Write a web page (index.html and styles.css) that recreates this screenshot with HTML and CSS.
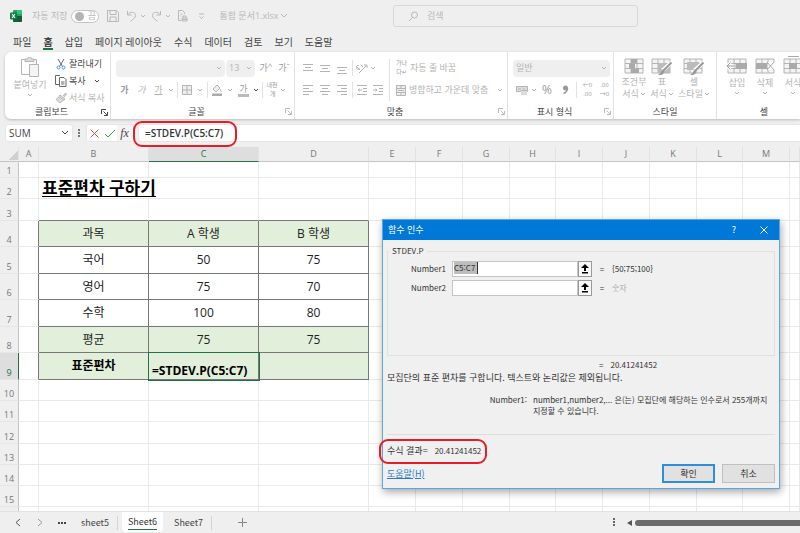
FILE: index.html
```html
<!DOCTYPE html>
<html lang="ko">
<head>
<meta charset="utf-8">
<title>통합 문서1.xlsx</title>
<link rel="stylesheet" href="styles.css">
</head>
<body>
<svg class="defs" aria-hidden="true">
  <symbol id="chev" viewBox="0 0 6 6"><path d="M1 2l2 2 2-2" fill="none" stroke="currentColor"/></symbol>
  <symbol id="launch" viewBox="0 0 7 7"><path d="M.5 5V.5H5M2.500 2.500L6 6M6.500 3v3.500H3" fill="none" stroke="currentColor"/></symbol>
  <symbol id="collapse" viewBox="0 0 8 10"><path d="M4 0L0 4h3v3h2V4h3zM1 8h6v1.500H1z" fill="currentColor"/></symbol>
  <symbol id="cells" viewBox="0 0 20 16"><path d="M1 1h18v14H1zM1 5.500h18M1 10.500h18M7 1v14M13 1v14" fill="#f4f4f4" stroke="currentColor"/></symbol>
</svg>

<header class="titlebar">
  <div class="quick">
    <svg class="logo" width="12" height="12" viewBox="0 0 12 12"><rect x="3" width="9" height="12" rx="1" fill="#21a366"/><path d="M3 6h9v5a1 1 0 0 1-1 1H4a1 1 0 0 1-1-1z" fill="#185c37"/><path d="M7 0h4a1 1 0 0 1 1 1v3H7z" fill="#33c481"/><rect y="2.500" width="7" height="7" rx="1" fill="#107c41"/><path d="M2 4l3 4M5 4L2 8" stroke="#fff" stroke-width="1.100"/></svg>
    <span class="autosave">자동 저장</span>
    <button class="toggle" aria-label="자동 저장"><i></i>끔</button>
    <button aria-label="저장" class="save"><svg width="12" height="12" viewBox="0 0 12 12"><path d="M.5.5h9l2 2v9H.5zM3 .5v4h6v-4M3 11.500V7h6v4.500" fill="none" stroke="currentColor"/></svg></button>
    <button aria-label="실행 취소" class="undo"><svg width="11" height="12" viewBox="0 0 11 12"><path d="M1.500 1v4h4M1.500 5C4 1 9.500 1.500 9.500 5.500 9.500 8 7 9 4.500 11.500" fill="none" stroke="currentColor"/></svg><svg class="c"><use href="#chev"/></svg></button>
    <button aria-label="다시 실행" class="undo"><svg width="11" height="12" viewBox="0 0 11 12"><path d="M9.500 1v4h-4M9.500 5C7 1 1.500 1.500 1.500 5.500 1.500 8 4 9 6.500 11.500" fill="none" stroke="currentColor"/></svg><svg class="c"><use href="#chev"/></svg></button>
    <button aria-label="인쇄 미리 보기" class="preview"><svg width="11" height="12" viewBox="0 0 11 12"><path d="M4 10.500H1.500V.5h4l2 2V4M3.500 4h2M3.500 6h1M5 11V8h5v3zM6 8V6h3v2M5 9.500h5" fill="none" stroke="currentColor"/></svg></button>
    <button aria-label="빠른 실행 도구 모음" class="more"><svg width="7" height="7" viewBox="0 0 7 7"><path d="M1 1h5M1.500 3.500l2 2 2-2" fill="none" stroke="currentColor"/></svg></button>
    <button class="doc">통합 문서1.xlsx<svg width="8" height="6" viewBox="0 0 8 6"><path d="M1 1l3 3 3-3" fill="none" stroke="currentColor"/></svg></button>
  </div>
  <label class="search"><svg width="11" height="11" viewBox="0 0 11 11"><circle cx="6.500" cy="4" r="3" fill="none" stroke="currentColor"/><path d="M4.500 6.500L1 10" stroke="currentColor"/></svg><input type="search" placeholder="검색" aria-label="검색"></label>
</header>

<nav class="tabs">
  <a href="#">파일</a><a href="#" class="on">홈</a><a href="#">삽입</a><a href="#">페이지 레이아웃</a><a href="#">수식</a><a href="#">데이터</a><a href="#">검토</a><a href="#">보기</a><a href="#">도움말</a>
</nav>

<section class="ribbon">
  <div class="group clipboard">
    <div class="tools">
      <button class="big paste"><svg width="20" height="20" viewBox="0 0 20 20"><path d="M6 2.500H1.500v15H9M13 2.500h3.500V7" fill="none" stroke="currentColor"/><path d="M5 4.500V2h2.500a2 2 0 0 1 4 0H14v2.500z" fill="#ddd" stroke="currentColor"/><path d="M9.500 7.500h9v12h-9z" fill="#f4f4f4" stroke="currentColor"/></svg><span>붙여넣기</span><svg class="c"><use href="#chev"/></svg></button>
      <div class="stack">
        <button class="dark"><svg width="12" height="12" viewBox="0 0 12 12"><path d="M3 1l4.500 7.500M9 1L4.500 8.500" fill="none" stroke="#666"/><circle cx="3.500" cy="9.500" r="1.500" fill="none" stroke="#3d9bd9"/><circle cx="8.500" cy="9.500" r="1.500" fill="none" stroke="#3d9bd9"/></svg>잘라내기</button>
        <button class="dark"><svg width="12" height="12" viewBox="0 0 12 12"><path d="M4 9.500H.5v-9H5M4.500 2.500H9l2 2v7H4.500zM6 7h3.500M6 9h3.500" fill="none" stroke="#666"/></svg>복사<svg class="c gap"><use href="#chev"/></svg></button>
        <button><svg width="12" height="12" viewBox="0 0 12 12"><path d="M8 4l2.500-3 1 1L9 5M5 3l5 4-1 1.500-5-4zM4 5L1 7.500 5 11l3-2.500" fill="#ddd" stroke="currentColor"/></svg>서식 복사</button>
      </div>
    </div>
    <div class="caption"><span>클립보드</span><button aria-label="클립보드 옵션" class="dark"><svg width="7" height="7"><use href="#launch"/></svg></button></div>
  </div>

  <div class="group font">
    <div class="tools rows">
      <div class="row">
        <span class="select name"><select aria-label="글꼴"><option></option></select><svg class="c"><use href="#chev"/></svg></span>
        <span class="select size"><select aria-label="글꼴 크기"><option>13</option></select><svg class="c"><use href="#chev"/></svg></span>
        <button class="w18 mid">가<sup>^</sup></button><button class="w18 mid">가<sup>ˇ</sup></button>
      </div>
      <div class="row">
        <button class="w17 mid"><b>가</b></button><button class="w17"><i>가</i></button><button class="w17"><u>가</u></button><button class="w8" aria-label="밑줄 옵션"><svg class="c"><use href="#chev"/></svg></button><hr>
        <button class="w14" aria-label="테두리"><svg width="10" height="10" viewBox="0 0 10 10"><path d="M.5.5h9v9h-9zM5 0v10M0 5h10" fill="#eee" stroke="currentColor"/></svg></button><button class="w11" aria-label="테두리 옵션"><svg class="c"><use href="#chev"/></svg></button><hr>
        <button class="w14" aria-label="채우기 색"><svg width="12" height="12" viewBox="0 0 12 12"><path d="M6 1L2 5l3 3 4-4zM9 5l1.500 3" fill="#eee" stroke="currentColor"/><path d="M1 9.500h10V12H1z" fill="#aaa"/></svg></button><button class="w11" aria-label="채우기 색 옵션"><svg class="c"><use href="#chev"/></svg></button>
        <button class="color">가</button><button class="w8 dark" aria-label="글꼴 색 옵션"><svg class="c"><use href="#chev"/></svg></button><hr>
        <button class="w14 tiny">내천<br>&nbsp;개</button><button class="w8" aria-label="윗주 옵션"><svg class="c"><use href="#chev"/></svg></button>
      </div>
    </div>
    <div class="caption"><span>글꼴</span><button aria-label="글꼴 옵션"><svg width="7" height="7"><use href="#launch"/></svg></button></div>
  </div>

  <div class="group align">
    <div class="tools">
      <div class="rows">
        <div class="row">
          <button class="w17" aria-label="위쪽 맞춤"><svg width="10" height="12"><path d="M0 2.500h10M2 5.500h6M0 8.500h10" stroke="currentColor"/></svg></button><button class="w17" aria-label="가운데 맞춤"><svg width="10" height="12"><path d="M0 3.500h10M2 6.500h6M0 9.500h10" stroke="currentColor"/></svg></button><button class="w17" aria-label="아래쪽 맞춤"><svg width="10" height="12"><path d="M0 5.500h10M2 8.500h6M0 11.500h10" stroke="currentColor"/></svg></button><hr>
          <button class="w14" aria-label="방향"><svg width="12" height="12" viewBox="0 0 12 12"><path d="M3 11l8-8M8 3h3v3M1 5l3 3M3 3.500a2 2 0 1 0 1 3M5 3l2 2" fill="none" stroke="currentColor"/></svg></button><button class="w8" aria-label="방향 옵션"><svg class="c"><use href="#chev"/></svg></button>
        </div>
        <div class="row">
          <button class="w17" aria-label="왼쪽"><svg width="10" height="10"><path d="M0 .5h10M0 3.500h6M0 6.500h10M0 9.500h6" stroke="currentColor"/></svg></button><button class="w17" aria-label="가운데"><svg width="10" height="10"><path d="M0 .5h10M2 3.500h6M0 6.500h10M2 9.500h6" stroke="currentColor"/></svg></button><button class="w17" aria-label="오른쪽"><svg width="10" height="10"><path d="M0 .5h10M4 3.500h6M0 6.500h10M4 9.500h6" stroke="currentColor"/></svg></button><hr>
          <button class="w14" aria-label="내어쓰기"><svg width="10" height="10"><path d="M0 .5h10M6 3.500h4M6 6.500h4M0 9.500h10M5 5H1M2.500 3.500L1 5l1.500 1.500" fill="none" stroke="currentColor"/></svg></button><button class="w18" aria-label="들여쓰기"><svg width="10" height="10"><path d="M0 .5h10M6 3.500h4M6 6.500h4M0 9.500h10M0 5h4M2.500 3.500L4 5 2.500 6.500" fill="none" stroke="currentColor"/></svg></button>
        </div>
      </div>
      <div class="rows wrap">
        <div class="row"><button class="text"><span class="tiny">가나<br>다↵</span>자동 줄 바꿈</button></div>
        <div class="row"><button class="text"><svg width="10" height="11" viewBox="0 0 10 11"><path d="M.5.5h9v10h-9zM.5 3.500h9M.5 7.500h9M5 .5v3M5 7.500v3M2 5.500h6" fill="#eee" stroke="currentColor"/></svg>병합하고 가운데 맞춤<svg class="c gap"><use href="#chev"/></svg></button></div>
      </div>
    </div>
    <div class="caption"><span>맞춤</span><button aria-label="맞춤 옵션"><svg width="7" height="7"><use href="#launch"/></svg></button></div>
  </div>

  <div class="group number">
    <div class="tools rows">
      <div class="row"><span class="select format"><select aria-label="표시 형식"><option>일반</option></select><svg class="c"><use href="#chev"/></svg></span></div>
      <div class="row">
        <button class="w17" aria-label="회계 형식"><svg width="12" height="10" viewBox="0 0 12 10"><path d="M.5 1.500h11v5H.5zM2 4h3M8 3v2" fill="#ddd" stroke="currentColor"/><path d="M5 5h6v5H5z" fill="#bbb"/><path d="M5 7h6M5 9h6" stroke="#fff"/></svg></button><button class="w8" aria-label="회계 옵션"><svg class="c"><use href="#chev"/></svg></button>
        <button class="w18 pct">%</button><button class="w18" aria-label="쉼표"><svg width="7" height="10" viewBox="0 0 7 10"><circle cx="3.500" cy="3" r="2.500" fill="#999"/><path d="M5.500 3q0 4-4 5.500" fill="none" stroke="#999" stroke-width="1.500"/></svg></button><hr>
        <button class="w17 tiny">←0<br>.00</button><button class="w17 tiny">.00<br>→0</button>
      </div>
    </div>
    <div class="caption"><span>표시 형식</span><button aria-label="표시 형식 옵션"><svg width="7" height="7"><use href="#launch"/></svg></button></div>
  </div>

  <div class="group styles">
    <div class="tools">
      <button class="big"><svg width="20" height="17" viewBox="0 0 20 17"><use href="#cells" width="20" height="16"/><path d="M7 1h6v4H7zM5 5.500h6v5H5zM7 10.500h8V15H7z" fill="#aaa"/></svg><span>조건부</span><span>서식<svg class="c"><use href="#chev"/></svg></span></button>
      <button class="big"><svg width="22" height="17" viewBox="0 0 22 17"><use href="#cells" width="20" height="16"/><path d="M7 5h12v10H7z" fill="#bbb"/><path d="M20.500 4.500l-9 8" stroke="#fff" stroke-width="4"/><path d="M20.500 4.500l-8 8" stroke="#999" stroke-width="2"/><path d="M12 11q3 2 0 5-3 2-5 1 3-2 5-6z" fill="#999"/></svg><span>표</span><span>서식<svg class="c"><use href="#chev"/></svg></span></button>
      <button class="big wide"><svg width="22" height="17" viewBox="0 0 22 17"><use href="#cells" width="20" height="16"/><path d="M4 4h12v8H4z" fill="#bbb"/><path d="M20.500 4.500l-9 8" stroke="#fff" stroke-width="4"/><path d="M20.500 4.500l-8 8" stroke="#999" stroke-width="2"/><path d="M12 11q3 2 0 5-3 2-5 1 3-2 5-6z" fill="#999"/></svg><span>셀</span><span>스타일<svg class="c"><use href="#chev"/></svg></span></button>
    </div>
    <div class="caption"><span>스타일</span></div>
  </div>

  <div class="group cellgroup">
    <div class="tools">
      <button class="big"><svg width="20" height="17" viewBox="0 0 20 17"><use href="#cells" width="20" height="16"/><path d="M7 5h13v6H7z" fill="#aaa"/><path d="M0 8h9M3.500 4.500L0 8l3.500 3.500" stroke="#fff" stroke-width="3" fill="none"/><path d="M0 8h9M3.500 4.500L0 8l3.500 3.500" stroke="#999" fill="none"/></svg><span>삽입</span><svg class="c"><use href="#chev"/></svg></button>
      <button class="big"><svg width="20" height="17" viewBox="0 0 20 17"><use href="#cells" width="20" height="16"/><path d="M1 5h11v6H1z" fill="#aaa"/><path d="M13 4h7v8h-7z" fill="#fff"/><path d="M12 4l7 8M19 4l-7 8" stroke="#aaa"/></svg><span>삭제</span><svg class="c"><use href="#chev"/></svg></button>
      <button class="big"><svg class="tall" width="20" height="19" viewBox="0 0 20 19"><use href="#cells" y="2" width="20" height="16"/><path d="M6 7h8v6H6z" fill="#aaa"/><path d="M5 .5h11" stroke="#aaa"/></svg><span>서식</span><svg class="c"><use href="#chev"/></svg></button>
    </div>
    <div class="caption"><span>셀</span></div>
  </div>
</section>

<section class="formulabar">
  <div class="namebox"><input value="SUM" aria-label="이름 상자"><button aria-label="이름 목록"><svg width="8" height="6" viewBox="0 0 8 6"><path d="M1 1l3 3 3-3" fill="none" stroke="currentColor"/></svg></button></div>
  <svg class="grip" width="2" height="9"><path d="M0 0h2v2H0zM0 3h2v2H0zM0 6h2v2H0z" fill="#777"/></svg>
  <div class="fbuttons">
    <button aria-label="취소"><svg width="9" height="9"><path d="M.5.5l8 8M8.500.5l-8 8" stroke="#e5484d"/></svg></button>
    <button aria-label="입력"><svg width="12" height="9"><path d="M1 5l3 3L11 1" fill="none" stroke="#2f9e50"/></svg></button>
    <button class="fx" aria-label="함수 삽입"><i>fx</i></button>
  </div>
  <div class="formula marked"><input value="=STDEV.P(C5:C7)" aria-label="수식 입력줄"></div>
</section>

<main class="sheet">
<table class="grid">
<colgroup><col class="rh"><col class="ca"><col class="cw"><col class="cw"><col class="cw"><col class="cn"><col class="cn"><col class="cn"><col class="cs"><col class="cn"><col class="cn"><col class="cn"><col class="cs"><col class="cn"><col></colgroup>
<thead><tr><th class="corner"></th><th>A</th><th>B</th><th class="sel">C</th><th>D</th><th>E</th><th>F</th><th>G</th><th>H</th><th>I</th><th>J</th><th>K</th><th>L</th><th>M</th><th></th></tr></thead>
<tbody>
<tr class="h16"><th>1</th><td></td><td></td><td></td><td></td><td></td><td></td><td></td><td></td><td></td><td></td><td></td><td></td><td></td><td></td></tr>
<tr class="h21"><th>2</th><td></td><td class="title" colspan="2"><span>표준편차 구하기</span></td><td></td><td></td><td></td><td></td><td></td><td></td><td></td><td></td><td></td><td></td><td></td></tr>
<tr class="h22 above"><th>3</th><td></td><td class="d"></td><td class="d"></td><td class="d"></td><td></td><td></td><td></td><td></td><td></td><td></td><td></td><td></td><td></td><td></td></tr>
<tr class="h26"><th>4</th><td class="e"></td><td class="d g">과목</td><td class="d g">A 학생</td><td class="d g">B 학생</td><td></td><td></td><td></td><td></td><td></td><td></td><td></td><td></td><td></td><td></td></tr>
<tr class="h27"><th>5</th><td class="e"></td><td class="d">국어</td><td class="d">50</td><td class="d">75</td><td></td><td></td><td></td><td></td><td></td><td></td><td></td><td></td><td></td><td></td></tr>
<tr class="h26"><th>6</th><td class="e"></td><td class="d">영어</td><td class="d">75</td><td class="d">70</td><td></td><td></td><td></td><td></td><td></td><td></td><td></td><td></td><td></td><td></td></tr>
<tr class="h27"><th>7</th><td class="e"></td><td class="d">수학</td><td class="d">100</td><td class="d">80</td><td></td><td></td><td></td><td></td><td></td><td></td><td></td><td></td><td></td><td></td></tr>
<tr class="h26"><th>8</th><td class="e"></td><td class="d g">평균</td><td class="d g">75</td><td class="d g">75</td><td></td><td></td><td></td><td></td><td></td><td></td><td></td><td></td><td></td><td></td></tr>
<tr class="h27"><th class="sel">9</th><td class="e"></td><td class="d g strong">표준편차</td><td class="d g edit">=STDEV.P(C5:C7)</td><td class="d g"></td><td></td><td></td><td></td><td></td><td></td><td></td><td></td><td></td><td></td><td></td></tr>
<tr class="h21"><th>10</th><td></td><td></td><td></td><td></td><td></td><td></td><td></td><td></td><td></td><td></td><td></td><td></td><td></td><td></td></tr>
<tr class="h21"><th>11</th><td></td><td></td><td></td><td></td><td></td><td></td><td></td><td></td><td></td><td></td><td></td><td></td><td></td><td></td></tr>
<tr class="h22"><th>12</th><td></td><td></td><td></td><td></td><td></td><td></td><td></td><td></td><td></td><td></td><td></td><td></td><td></td><td></td></tr>
<tr class="h21"><th>13</th><td></td><td></td><td></td><td></td><td></td><td></td><td></td><td></td><td></td><td></td><td></td><td></td><td></td><td></td></tr>
<tr class="h21"><th>14</th><td></td><td></td><td></td><td></td><td></td><td></td><td></td><td></td><td></td><td></td><td></td><td></td><td></td><td></td></tr>
<tr class="h21"><th>15</th><td></td><td></td><td></td><td></td><td></td><td></td><td></td><td></td><td></td><td></td><td></td><td></td><td></td><td></td></tr>
<tr class="h21"><th></th><td></td><td></td><td></td><td></td><td></td><td></td><td></td><td></td><td></td><td></td><td></td><td></td><td></td><td></td></tr>
</tbody>
</table>
</main>

<footer class="sheetbar">
  <button class="w22" aria-label="이전 시트"><svg width="6" height="9"><path d="M5 1L1 4.500 5 8" fill="none" stroke="#555"/></svg></button>
  <button class="w22" aria-label="다음 시트"><svg width="6" height="9"><path d="M1 1l4 3.500L1 8" fill="none" stroke="#999"/></svg></button>
  <button class="w22" aria-label="시트 목록"><svg width="8" height="2"><path d="M0 0h2v2H0zM3 0h2v2H3zM6 0h2v2H6z" fill="#444"/></svg></button>
  <button class="tab">sheet5</button><button class="tab on"><span>Sheet6</span></button><button class="tab last">Sheet7</button>
  <button class="add" aria-label="새 시트"><svg width="9" height="9"><path d="M0 4.500h9M4.500 0v9" stroke="#888"/></svg></button>
  <svg class="dots" width="2" height="9"><path d="M0 0h2v2H0zM0 3h2v2H0zM0 6h2v2H0z" fill="#666"/></svg>
  <div class="scroll"><svg width="5" height="6"><path d="M5 0v6L0 3z" fill="#555"/></svg><i></i></div>
</footer>

<form class="dialog" role="dialog" aria-labelledby="dt">
  <div class="dtitle"><span id="dt">함수 인수</span><button type="button">?</button><button type="button" aria-label="닫기"><svg width="8" height="8"><path d="M.5.5l7 7M7.500.5l-7 7" stroke="#fff"/></svg></button></div>
  <div class="dbody">
    <fieldset>
      <legend>STDEV.P</legend>
      <div class="arg"><label for="n1">Number1</label><span class="box"><input id="n1" class="picked" value="C5:C7"></span><button type="button" aria-label="범위 선택"><svg width="8" height="10"><use href="#collapse"/></svg></button><span>=</span><span>{50;75;100}</span></div>
      <div class="arg"><label for="n2">Number2</label><span class="box"><input id="n2"></span><button type="button" aria-label="범위 선택"><svg width="8" height="10"><use href="#collapse"/></svg></button><span>=</span><span class="hint">숫자</span></div>
    </fieldset>
    <div class="outcome"><span>=</span><span>20.41241452</span></div>
    <p class="about">모집단의 표준 편차를 구합니다. 텍스트와 논리값은 제외됩니다.</p>
    <dl><dt>Number1:</dt><dd>number1,number2,... 은(는) 모집단에 해당하는 인수로서 255개까지<br>지정할 수 있습니다.</dd></dl>
    <div class="result marked"><span>수식 결과=</span><span class="value">20.41241452</span></div>
    <div class="actions"><a href="#">도움말(H)</a><button class="ok">확인</button><button type="button">취소</button></div>
  </div>
</form>
</body>
</html>
```
FILE: styles.css
```css
*, *::after { box-sizing: border-box; }

body {
  margin: 0;
  height: 100vh;
  display: flex;
  flex-direction: column;
  position: relative;
  overflow: hidden;
  background: #efefef;
  color: #444;
  font: 9px/12px "Open Sans", "Noto Sans CJK KR", sans-serif;
}

button, input, select { font: inherit; color: inherit; margin: 0; padding: 0; border: 0; background: none; border-radius: 0; outline: 0; min-width: 0; }
button { display: flex; align-items: center; justify-content: center; flex: none; white-space: nowrap; }
svg { flex: none; display: block; }
.defs { position: absolute; width: 0; height: 0; }
.c { width: 6px; height: 6px; }

/* title bar */
.titlebar { flex: none; height: 32px; display: grid; grid-template-columns: 393px minmax(0, 245px) 1fr; align-items: center; color: #b8b8b8; }
.quick { display: flex; align-items: center; padding-left: 10px; }
.autosave { margin: 0 4px 0 10px; white-space: nowrap; }
.toggle { width: 28px; height: 13px; border: 1px solid #c4c4c4; border-radius: 7px; background: #fff; gap: 4px; }
.toggle i { width: 9px; height: 9px; border-radius: 50%; background: #b4b4b4; }
.save { margin: 0 7px 0 8px; }
.undo { gap: 3px; margin-right: 5px; }
.preview { margin-left: 1px; }
.more { margin: 0 14px 0 10px; }
.doc { gap: 2px; }
.search { height: 22px; display: flex; align-items: center; gap: 8px; padding: 0 14px; border: 1px solid #d8d8d8; border-radius: 3px; }
.search input { flex: 1; }
.search input::placeholder { color: #b8b8b8; }

/* tabs */
.tabs { flex: none; height: 20px; display: flex; gap: 12px; padding: 2px 13px; font-size: 10px; line-height: 16px; }
.tabs a { color: #444; text-decoration: none; white-space: nowrap; }
.tabs .on { font-weight: 700; border-bottom: 2px solid #217346; }

/* ribbon */
.ribbon { flex: none; height: 67px; margin-left: 5px; display: flex; overflow: hidden; background: #fff; color: #b4b4b4; border-radius: 6px 0 0 6px; box-shadow: 0 1px 3px #bbb; }
.group { flex: none; display: flex; flex-direction: column; padding: 3px 0 1px; border-right: 1px solid #e2e2e2; }
.tools { flex: 1; display: flex; }
.caption { height: 13px; display: flex; align-items: center; color: #444; }
.caption span { flex: 1; text-align: center; }
.caption button { width: 12px; color: #bbb; }
.ribbon .dark { color: #444; }
.clipboard { width: 106px; }
.font { width: 184px; }
.align { width: 213px; }
.number { width: 106px; }
.styles { width: 103px; }
.cellgroup { flex: 1 0 94px; border: 0; }
.big { flex-direction: column; justify-content: flex-start; align-self: flex-start; width: 28px; padding-top: 3px; line-height: 12px; }
.big > svg:first-child { margin-bottom: 1px; }
.big .tall { margin-top: -2px; }
.big span { display: flex; align-items: center; gap: 1px; }
.paste { width: 50px; padding-top: 2px; }
.wide { width: 36px; }
.styles .tools, .cellgroup .tools { padding-left: 6px; }
.cellgroup .big span, .paste span { margin: 1px 0; }
.stack { display: flex; flex-direction: column; align-items: flex-start; }
.stack button { height: 17px; gap: 2px; }
.gap { margin-left: 6px; }
.rows { display: flex; flex-direction: column; padding-top: 4px; gap: 4px; }
.row { height: 18px; display: flex; align-items: center; }
.row hr { width: 1px; height: 16px; margin: 0 2px; border: 0; background: #e2e2e2; }
.rows.tools { padding-left: 5px; }
.select { height: 17px; display: flex; align-items: center; padding: 0 3px; border-radius: 4px; background: #efefef; }
.select select { flex: 1; appearance: none; }
.name { width: 109px; margin-right: 1px; }
.size { width: 29px; margin-right: 2px; }
.format { width: 97px; }
.w8 { width: 8px; }
.w11 { width: 11px; }
.w14 { width: 14px; }
.w17 { width: 17px; }
.w18 { width: 18px; }
.w22 { width: 22px; }
.mid { color: #999; }
.row sup { font-size: 8px; line-height: 8px; align-self: flex-start; }
.color { width: 11px; margin: 0 3px; line-height: 10px; color: #999; border-bottom: 3px solid #bbb; }
.tiny { font-size: 6px; line-height: 9px; text-align: center; color: #999; }
.pct { font-size: 12px; color: #999; }
.align .rows { padding-left: 4px; width: 94px; }
.align .wrap { width: auto; margin: 4px 0; padding: 0 0 0 6px; border-left: 1px solid #e2e2e2; }
.text { gap: 3px; }

/* formula bar */
.formulabar { flex: none; height: 28px; display: flex; align-items: center; padding: 5px 0 5px 5px; }
.namebox, .fbuttons, .formula { height: 18px; display: flex; align-items: center; background: #fff; border: 1px solid #e6e6e6; border-radius: 3px; }
.namebox { width: 68px; padding: 0 3px; font-size: 10px; }
.namebox input { flex: 1; }
.grip { margin: 0 6px 0 5px; }
.fbuttons { width: 48px; }
.fbuttons button { width: 15px; height: 16px; }
.fbuttons .fx { background: #f4f4f4; font: 12px/14px "Liberation Serif", serif; }
.formula { flex: 1; position: relative; margin-left: 4px; padding-left: 6px; border-right: 0; border-radius: 3px 0 0 3px; font-size: 10px; font-weight: 600; color: #333; }
.formula input { flex: 1; }
.marked::after { content: ""; position: absolute; border: 2px solid #e81c24; border-radius: 9px; pointer-events: none; }
.formula::after { left: -6px; top: -4px; width: 104px; height: 26px; }

/* worksheet */
.sheet { flex: 1; min-height: 0; overflow: hidden; background: #fff; }
.grid { width: 100%; table-layout: fixed; border-collapse: separate; border-spacing: 0; }
.rh { width: 19px; }
.ca { width: 20px; }
.cw { width: 110px; }
.cn { width: 47px; }
.cs { width: 46px; }
.grid th { padding: 0; font-size: 9px; line-height: 12px; font-weight: 400; color: #777; background: #efefef; }
.grid thead th { height: 15px; border-right: 1px solid #e2e2e2; border-bottom: 1px solid #c4c4c4; }
.grid thead .sel { background: #dedede; color: #217346; border-bottom-color: #217346; }
.grid .corner { background: linear-gradient(135deg, transparent 60%, #d0d0d0 60%) 6px 2px / 12px 11px no-repeat #efefef; }
.grid tbody th { vertical-align: bottom; border-right: 1px solid #c4c4c4; border-bottom: 1px solid #e6e6e6; }
.grid tbody .sel { background: #dedede; color: #217346; border-right-color: #217346; }
.grid td { padding: 0; border-right: 1px solid #e9e9e9; border-bottom: 1px solid #e9e9e9; font-size: 12px; line-height: 16px; text-align: center; color: #222; white-space: nowrap; }
.h16 { height: 16px; }
.h21 { height: 21px; }
.h22 { height: 22px; }
.h26 { height: 26px; }
.h27 { height: 27px; }
.grid .d { border-color: #777; }
.grid .above .d { border-right-color: #e9e9e9; }
.grid .e { border-right-color: #777; }
.grid .g { background: #e2efda; }
.grid .strong { font-weight: 700; color: #000; }
.grid .title { text-align: left; padding-left: 3px; font-size: 17px; line-height: 20px; font-weight: 700; color: #000; }
.title span { text-decoration: underline; text-decoration-thickness: 1px; text-underline-offset: 2px; }
.grid .edit { vertical-align: bottom; text-align: left; padding-left: 3px; font-weight: 700; color: #000; outline: 1px solid #217346; }

/* sheet tabs */
.sheetbar { flex: none; height: 22px; display: flex; align-items: center; padding-left: 7px; font-family: "Noto Sans CJK KR", sans-serif; border-top: 1px solid #e2e2e2; }
.tab { height: 14px; padding: 0 8px; border-right: 1px solid #d4d4d4; }
.tab.on { height: 20px; align-self: flex-start; margin-left: 4px; padding: 0 6px; background: #fff; border: 0; border-radius: 0 0 4px 4px; color: #333; }
.tab.on span { border-bottom: 1px solid #217346; line-height: 14px; }
.tab.last { padding-left: 11px; }
.add { margin-left: 26px; }
.dots { margin-left: auto; margin-right: 11px; }
.scroll { flex: 0 0 174px; display: flex; align-items: center; gap: 3px; height: 9px; padding-left: 1px; }
.scroll i { flex: 1; height: 6px; border-radius: 3px 0 0 3px; background: #6b6b6b; }

/* function arguments dialog */
.dialog { position: absolute; left: 382px; top: 219px; width: 398px; background: #f0f0f0; border: 1px solid #5aa7e0; box-shadow: 1px 3px 8px rgba(0, 0, 0, .35); color: #333; font-family: "Noto Sans CJK KR", sans-serif; }
.dtitle { height: 20px; display: flex; align-items: center; padding-left: 5px; background: #0078d7; color: #fff; }
.dtitle span { flex: 1; }
.dtitle button { width: 30px; }
.dbody { padding: 5px 4px; }
fieldset, .outcome, dl, .value { font-size: 8px; }
fieldset { height: 111px; margin: 0; padding: 4px 0 0; border: 1px solid #e0e0e0; }
legend { margin-left: 1px; padding: 0 3px; }
.arg { display: grid; grid-template-columns: 58px 132px 14px 20px 1fr; align-items: center; height: 16px; margin-bottom: 3px; }
.arg label { text-align: right; }
.box { height: 16px; margin-left: 6px; display: flex; align-items: flex-start; background: #fff; border: 1px solid #c4c4c4; }
.box input { flex: 1; height: 12px; }
.box .picked { flex: 0 0 24px; margin-left: 1px; background: #bdbdbd; border-right: 1px solid #333; }
.arg button { height: 16px; background: #f8f8f8; border: 1px solid #999; color: #000; }
.arg > span:nth-child(4) { text-align: center; }
.hint { color: #aaa; }
.arg, .outcome { white-space: nowrap; }
.outcome { display: flex; gap: 7px; padding: 3px 0 1px 212px; }
.about { margin: 0; white-space: nowrap; }
dl { margin: 10px 0 0; height: 41px; display: flex; gap: 6px; line-height: 11px; border-bottom: 1px solid #dedede; }
dt { width: 140px; text-align: right; }
dd { margin: 0; white-space: nowrap; }
.result { position: relative; display: flex; gap: 7px; margin-top: 10px; }
.result::after { left: -8px; top: -6px; width: 108px; height: 25px; }
.actions { display: flex; align-items: center; gap: 7px; margin-top: 7px; }
.actions a { margin-right: auto; color: #2878c8; }
.actions button { width: 53px; height: 19px; background: #e1e1e1; border: 1px solid #c0c0c0; }
.actions .ok { border: 2px solid #2f8edb; }
```
